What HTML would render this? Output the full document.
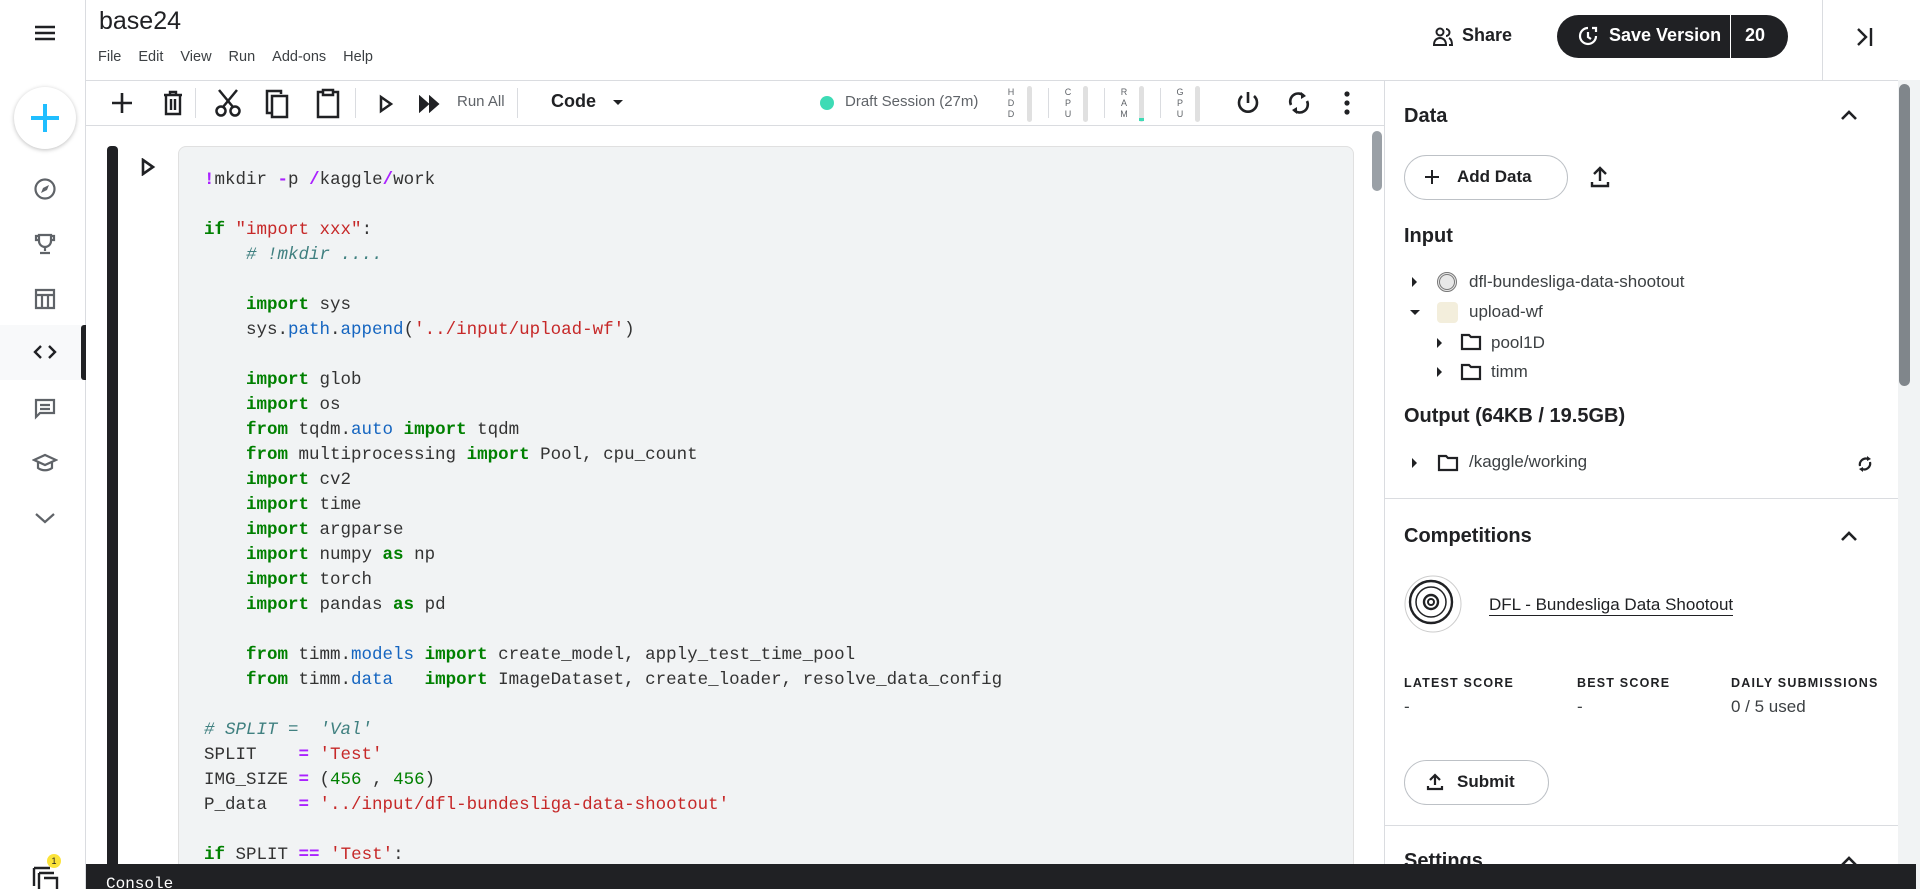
<!DOCTYPE html>
<html style="overflow:hidden;height:889px"><head><meta charset="utf-8">
<style>
*{box-sizing:border-box;margin:0;padding:0}
body{width:1920px;height:889px;overflow:hidden;background:#fff;font-family:"Liberation Sans",sans-serif;color:#202124;position:relative}
.a{position:absolute}
svg{display:block}
.code{font-family:"Liberation Mono",monospace;font-size:17.5px;line-height:25px;color:#333;white-space:pre}
.k{color:#008000;font-weight:bold}.s{color:#c62828}.c{color:#408080;font-style:italic}.n{color:#008000}.o{color:#aa22ff;font-weight:bold}.b{color:#1565c0}
.res{font-size:9px;line-height:11px;color:#5f6368;text-align:center;width:8px}
.bar{width:5px;height:36px;background:#e0e0e0;border-radius:3px}
.sep{width:1px;background:#dadce0}
.rt{font-size:17px;color:#3c4043}
.lbl{font-size:12.5px;font-weight:bold;letter-spacing:1.2px;color:#202124}
</style></head><body>

<!-- left nav -->
<div class="a" style="left:85px;top:0;width:1px;height:889px;background:#dadce0"></div>
<svg class="a" style="left:33px;top:23px" width="24" height="20"><path d="M2 4h20M2 10h20M2 16h20" stroke="#202124" stroke-width="2.4"/></svg>
<div class="a" style="left:14px;top:87px;width:62px;height:62px;border-radius:50%;background:#fff;box-shadow:0 1px 4px rgba(0,0,0,.25)"></div>
<svg class="a" style="left:29px;top:102px" width="32" height="32"><path d="M16 2v28M2 16h28" stroke="#20beff" stroke-width="4"/></svg>
<svg class="a" style="left:33px;top:177px" width="24" height="24"><circle cx="12" cy="12" r="9.5" fill="none" stroke="#5f6368" stroke-width="2.2"/><path d="M16 8l-6 3-2 5 6-3z" fill="#5f6368"/></svg>
<svg class="a" style="left:33px;top:232px" width="24" height="24"><path d="M6 3h12v6a6 6 0 0 1-12 0zM3 4h3v4H3zM18 4h3v4h-3zM12 15v4M7 21h10" fill="none" stroke="#5f6368" stroke-width="2.2"/></svg>
<svg class="a" style="left:33px;top:287px" width="24" height="24"><path d="M3 3h18v18H3zM3 8h18M9 8v13M15 8v13" fill="none" stroke="#5f6368" stroke-width="2.2"/></svg>
<div class="a" style="left:0;top:325px;width:85px;height:55px;background:#f8f9fa"></div>
<div class="a" style="left:81px;top:325px;width:5px;height:55px;background:#202124;border-radius:3px 0 0 3px"></div>
<svg class="a" style="left:32px;top:342px" width="26" height="20"><path d="M9 4L3 10l6 6M17 4l6 6-6 6" fill="none" stroke="#202124" stroke-width="2.4"/></svg>
<svg class="a" style="left:33px;top:397px" width="24" height="24"><path d="M3 3h18v13H7l-4 4zM7 8h10M7 12h10" fill="none" stroke="#5f6368" stroke-width="2.2"/></svg>
<svg class="a" style="left:32px;top:452px" width="26" height="22"><path d="M2 8l11-5 11 5-11 5zM6 10v6c4 3 10 3 14 0v-6" fill="none" stroke="#5f6368" stroke-width="2.2"/></svg>
<svg class="a" style="left:33px;top:510px" width="24" height="16"><path d="M3 4l9 8 9-8" fill="none" stroke="#5f6368" stroke-width="2.2"/></svg>
<svg class="a" style="left:32px;top:864px" width="28" height="25"><path d="M2 4h16M2 4v18M7 9h15M7 9v16M12 14h13v11" fill="none" stroke="#202124" stroke-width="2.4"/></svg>
<div class="a" style="left:47px;top:854px;width:14px;height:14px;border-radius:50%;background:#fbe33a;font-size:9px;text-align:center;line-height:14px">1</div>

<!-- header -->
<div class="a" style="left:99px;top:7px;font-size:25px;color:#202124">base24</div>
<div class="a" style="left:98px;top:49px;font-size:14.5px;color:#3c4043">
<span style="margin-right:17px">File</span><span style="margin-right:17px">Edit</span><span style="margin-right:17px">View</span><span style="margin-right:17px">Run</span><span style="margin-right:17px">Add-ons</span><span>Help</span></div>
<svg class="a" style="left:1432px;top:26px" width="22" height="22"><circle cx="8" cy="6" r="3.5" fill="none" stroke="#202124" stroke-width="2"/><path d="M2 19c0-5 3-7 6-7s6 2 6 7zM14 3a3.5 3.5 0 0 1 0 7M17 12c2 1 3 3 3 7h-3" fill="none" stroke="#202124" stroke-width="2"/></svg>
<div class="a" style="left:1462px;top:25px;font-size:18px;font-weight:bold">Share</div>
<div class="a" style="left:1557px;top:15px;width:231px;height:43px;border-radius:22px;background:#202124"></div>
<svg class="a" style="left:1577px;top:25px" width="22" height="22"><path d="M11 3a8 8 0 1 0 8 8M11 7v5l3 2M15 3h4v4" fill="none" stroke="#fff" stroke-width="2.2"/></svg>
<div class="a" style="left:1609px;top:25px;font-size:18px;font-weight:bold;color:#fff">Save Version</div>
<div class="a" style="left:1730px;top:15px;width:1px;height:43px;background:#fff"></div>
<div class="a" style="left:1745px;top:25px;font-size:18px;font-weight:bold;color:#fff">20</div>
<div class="a" style="left:1822px;top:0;width:1px;height:80px;background:#dadce0"></div>
<svg class="a" style="left:1854px;top:26px" width="22" height="22"><path d="M4 3l8 8-8 8M17 2v18" fill="none" stroke="#202124" stroke-width="2.4"/></svg>
<div class="a" style="left:86px;top:80px;width:1834px;height:1px;background:#dadce0"></div>

<!-- toolbar -->
<div class="a" style="left:86px;top:125px;width:1298px;height:1px;background:#dadce0"></div>
<svg class="a" style="left:110px;top:91px" width="24" height="24"><path d="M12 2v20M2 12h20" stroke="#202124" stroke-width="2.6"/></svg>
<svg class="a" style="left:162px;top:90px" width="22" height="26"><path d="M2 5h18M8 5V2h6v3M4 5v19h14V5M9 9v11M13 9v11" fill="none" stroke="#202124" stroke-width="2.4"/></svg>
<div class="a sep" style="left:195px;top:88px;height:30px"></div>
<svg class="a" style="left:214px;top:88px" width="28" height="30"><circle cx="7" cy="23" r="4.5" fill="none" stroke="#202124" stroke-width="2.5"/><circle cx="21" cy="23" r="4.5" fill="none" stroke="#202124" stroke-width="2.5"/><path d="M9 19L23 2M19 19L5 2" stroke="#202124" stroke-width="2.5"/></svg>
<svg class="a" style="left:265px;top:89px" width="26" height="30"><path d="M6 24H2V2h14v3M7 7h15v21H7z" fill="none" stroke="#202124" stroke-width="2.5"/></svg>
<svg class="a" style="left:315px;top:87px" width="26" height="32"><path d="M8 5H3v25h20V5h-5M8 3h10v5H8z" fill="none" stroke="#202124" stroke-width="2.5"/></svg>
<div class="a sep" style="left:355px;top:88px;height:30px"></div>
<svg class="a" style="left:378px;top:94px" width="16" height="20"><path d="M3 3l10 7-10 7z" fill="none" stroke="#202124" stroke-width="2.5"/></svg>
<svg class="a" style="left:418px;top:95px" width="24" height="18"><path d="M2 2l8 7-8 7zM12 2l8 7-8 7z" fill="#202124" stroke="#202124" stroke-width="2"/></svg>
<div class="a" style="left:457px;top:93px;font-size:15px;color:#5f6368">Run All</div>
<div class="a sep" style="left:517px;top:88px;height:30px"></div>
<div class="a" style="left:551px;top:91px;font-size:18px;font-weight:bold">Code</div>
<div class="a" style="left:613px;top:100px;width:0;height:0;border-left:5px solid transparent;border-right:5px solid transparent;border-top:5px solid #202124"></div>
<div class="a" style="left:820px;top:96px;width:14px;height:14px;border-radius:50%;background:#3ddbb5"></div>
<div class="a" style="left:845px;top:93px;font-size:15px;color:#5f6368">Draft Session (27m)</div>
<div class="a res" style="left:1007px;top:87px">H<br>D<br>D</div><div class="a bar" style="left:1027px;top:86px"></div>
<div class="a sep" style="left:1048px;top:88px;height:30px"></div>
<div class="a res" style="left:1064px;top:87px">C<br>P<br>U</div><div class="a bar" style="left:1083px;top:86px"></div>
<div class="a sep" style="left:1104px;top:88px;height:30px"></div>
<div class="a res" style="left:1120px;top:87px">R<br>A<br>M</div><div class="a bar" style="left:1139px;top:86px"></div>
<div class="a" style="left:1139px;top:118px;width:5px;height:3px;background:#3ddbb5"></div>
<div class="a sep" style="left:1160px;top:88px;height:30px"></div>
<div class="a res" style="left:1176px;top:87px">G<br>P<br>U</div><div class="a bar" style="left:1195px;top:86px"></div>
<svg class="a" style="left:1235px;top:90px" width="26" height="26"><path d="M13 2v11M7 6a9 9 0 1 0 12 0" fill="none" stroke="#202124" stroke-width="2.6"/></svg>
<svg class="a" style="left:1286px;top:90px" width="26" height="26"><path d="M5 15a8 8 0 0 1 13-9M21 11a8 8 0 0 1-13 9" fill="none" stroke="#202124" stroke-width="2.6"/><path d="M15 2l5 4-5 3zM11 24l-5-4 5-3z" fill="#202124"/></svg>
<svg class="a" style="left:1342px;top:90px" width="10" height="26"><circle cx="5" cy="4" r="2.6" fill="#202124"/><circle cx="5" cy="13" r="2.6" fill="#202124"/><circle cx="5" cy="22" r="2.6" fill="#202124"/></svg>

<!-- code cell -->
<div class="a" style="left:107px;top:146px;width:11px;height:743px;background:#202124;border-radius:4px 4px 0 0"></div>
<svg class="a" style="left:140px;top:158px" width="16" height="18"><path d="M3 2l10 7-10 7z" fill="none" stroke="#202124" stroke-width="2.6"/></svg>
<div class="a" style="left:178px;top:146px;width:1176px;height:743px;background:#f1f3f4;border:1px solid #e0e0e0;border-bottom:none;border-radius:8px 8px 0 0"></div>
<div class="a" style="left:1372px;top:131px;width:10px;height:60px;background:#9aa0a6;border-radius:5px"></div>
<div class="a code" style="left:204px;top:168px;height:710px;overflow:hidden"><span class="o">!</span>mkdir <span class="o">-</span>p <span class="o">/</span>kaggle<span class="o">/</span>work

<span class="k">if</span> <span class="s">"import xxx"</span>:
    <span class="c"># !mkdir ....</span>

    <span class="k">import</span> sys
    sys.<span class="b">path</span>.<span class="b">append</span>(<span class="s">'../input/upload-wf'</span>)

    <span class="k">import</span> glob
    <span class="k">import</span> os
    <span class="k">from</span> tqdm.<span class="b">auto</span> <span class="k">import</span> tqdm
    <span class="k">from</span> multiprocessing <span class="k">import</span> Pool, cpu_count
    <span class="k">import</span> cv2
    <span class="k">import</span> time
    <span class="k">import</span> argparse
    <span class="k">import</span> numpy <span class="k">as</span> np
    <span class="k">import</span> torch
    <span class="k">import</span> pandas <span class="k">as</span> pd

    <span class="k">from</span> timm.<span class="b">models</span> <span class="k">import</span> create_model, apply_test_time_pool
    <span class="k">from</span> timm.<span class="b">data</span>   <span class="k">import</span> ImageDataset, create_loader, resolve_data_config

<span class="c"># SPLIT =  'Val'</span>
SPLIT    <span class="o">=</span> <span class="s">'Test'</span>
IMG_SIZE <span class="o">=</span> (<span class="n">456</span> , <span class="n">456</span>)
P_data   <span class="o">=</span> <span class="s">'../input/dfl-bundesliga-data-shootout'</span>

<span class="k">if</span> SPLIT <span class="o">==</span> <span class="s">'Test'</span>:</div>

<!-- right panel -->
<div class="a" style="left:1384px;top:80px;width:1px;height:809px;background:#dadce0"></div>
<div class="a" style="left:1898px;top:80px;width:22px;height:809px;background:#f1f3f4"></div>
<div class="a" style="left:1899px;top:84px;width:11px;height:302px;background:#80868b;border-radius:6px"></div>
<div class="a" style="left:1404px;top:105px;font-size:20px;font-weight:bold">Data</div>
<svg class="a" style="left:1839px;top:108px" width="20" height="14"><path d="M3 11l7-7 7 7" fill="none" stroke="#202124" stroke-width="2.6"/></svg>
<div class="a" style="left:1404px;top:155px;width:164px;height:45px;border:1px solid #bdc1c6;border-radius:23px"></div>
<svg class="a" style="left:1424px;top:169px" width="16" height="16"><path d="M8 1v14M1 8h14" stroke="#202124" stroke-width="2"/></svg>
<div class="a" style="left:1457px;top:167px;font-size:17px;font-weight:bold">Add Data</div>
<svg class="a" style="left:1589px;top:165px" width="22" height="24"><path d="M11 16V3M5 9l6-6 6 6M3 17v4h16v-4" fill="none" stroke="#202124" stroke-width="2.4"/></svg>
<div class="a" style="left:1404px;top:225px;font-size:20px;font-weight:bold">Input</div>
<div class="a" style="left:1412px;top:277px;border-top:5px solid transparent;border-bottom:5px solid transparent;border-left:5px solid #202124"></div>
<div class="a" style="left:1437px;top:272px;width:20px;height:20px;border-radius:50%;background:#e8e8e8;border:3px double #777"></div>
<div class="a rt" style="left:1469px;top:272px">dfl-bundesliga-data-shootout</div>
<div class="a" style="left:1410px;top:310px;border-left:5px solid transparent;border-right:5px solid transparent;border-top:5px solid #202124"></div>
<div class="a" style="left:1437px;top:302px;width:21px;height:21px;border-radius:4px;background:#f3eedc"></div>
<div class="a rt" style="left:1469px;top:302px">upload-wf</div>
<div class="a" style="left:1437px;top:338px;border-top:5px solid transparent;border-bottom:5px solid transparent;border-left:5px solid #202124"></div>
<svg class="a" style="left:1460px;top:333px" width="22" height="18"><path d="M2 2h7l2 2h9v12H2z" fill="none" stroke="#202124" stroke-width="2.2"/></svg>
<div class="a rt" style="left:1491px;top:333px">pool1D</div>
<div class="a" style="left:1437px;top:367px;border-top:5px solid transparent;border-bottom:5px solid transparent;border-left:5px solid #202124"></div>
<svg class="a" style="left:1460px;top:363px" width="22" height="18"><path d="M2 2h7l2 2h9v12H2z" fill="none" stroke="#202124" stroke-width="2.2"/></svg>
<div class="a rt" style="left:1491px;top:362px">timm</div>
<div class="a" style="left:1404px;top:405px;font-size:20px;font-weight:bold">Output (64KB / 19.5GB)</div>
<div class="a" style="left:1412px;top:458px;border-top:5px solid transparent;border-bottom:5px solid transparent;border-left:5px solid #202124"></div>
<svg class="a" style="left:1437px;top:454px" width="22" height="18"><path d="M2 2h7l2 2h9v12H2z" fill="none" stroke="#202124" stroke-width="2.2"/></svg>
<div class="a rt" style="left:1469px;top:452px">/kaggle/working</div>
<svg class="a" style="left:1856px;top:455px" width="18" height="18"><path d="M4 11a6 6 0 0 1 8-7M14 7a6 6 0 0 1-8 7" fill="none" stroke="#202124" stroke-width="2.2"/><path d="M11 1l4 3-4 2zM7 17l-4-3 4-2z" fill="#202124"/></svg>
<div class="a" style="left:1385px;top:498px;width:513px;height:1px;background:#dadce0"></div>
<div class="a" style="left:1404px;top:525px;font-size:20px;font-weight:bold">Competitions</div>
<svg class="a" style="left:1839px;top:529px" width="20" height="14"><path d="M3 11l7-7 7 7" fill="none" stroke="#202124" stroke-width="2.6"/></svg>
<svg class="a" style="left:1403px;top:574px" width="60" height="60"><circle cx="30" cy="30" r="28" fill="none" stroke="#ccc" stroke-width="1"/><circle cx="28" cy="28" r="21" fill="none" stroke="#202124" stroke-width="2.4"/><circle cx="28" cy="28" r="15" fill="none" stroke="#202124" stroke-width="1.5"/><circle cx="28" cy="28" r="7" fill="none" stroke="#202124" stroke-width="2.4"/><circle cx="28" cy="28" r="3" fill="none" stroke="#202124" stroke-width="2"/></svg>
<div class="a" style="left:1489px;top:594px;font-size:17px;color:#202124;border-bottom:1px solid #202124;line-height:21px">DFL - Bundesliga Data Shootout</div>
<div class="a lbl" style="left:1404px;top:676px">LATEST SCORE</div>
<div class="a lbl" style="left:1577px;top:676px">BEST SCORE</div>
<div class="a lbl" style="left:1731px;top:676px">DAILY SUBMISSIONS</div>
<div class="a rt" style="left:1404px;top:697px">-</div>
<div class="a rt" style="left:1577px;top:697px">-</div>
<div class="a rt" style="left:1731px;top:697px">0 / 5 used</div>
<div class="a" style="left:1404px;top:760px;width:145px;height:45px;border:1px solid #bdc1c6;border-radius:23px"></div>
<svg class="a" style="left:1426px;top:772px" width="18" height="20"><path d="M9 13V3M4 8l5-5 5 5M2 14v3h14v-3" fill="none" stroke="#202124" stroke-width="2.2"/></svg>
<div class="a" style="left:1457px;top:772px;font-size:17px;font-weight:bold">Submit</div>
<div class="a" style="left:1385px;top:825px;width:513px;height:1px;background:#dadce0"></div>
<div class="a" style="left:1404px;top:850px;font-size:20px;font-weight:bold">Settings</div>
<svg class="a" style="left:1839px;top:854px" width="20" height="14"><path d="M3 11l7-7 7 7" fill="none" stroke="#202124" stroke-width="2.6"/></svg>

<!-- console -->
<div class="a" style="left:86px;top:864px;width:1830px;height:25px;background:#202124;overflow:hidden"><div style="position:absolute;left:20px;top:11px;font-family:'Liberation Mono',monospace;font-size:16px;color:#fff">Console</div></div>
</body></html>
